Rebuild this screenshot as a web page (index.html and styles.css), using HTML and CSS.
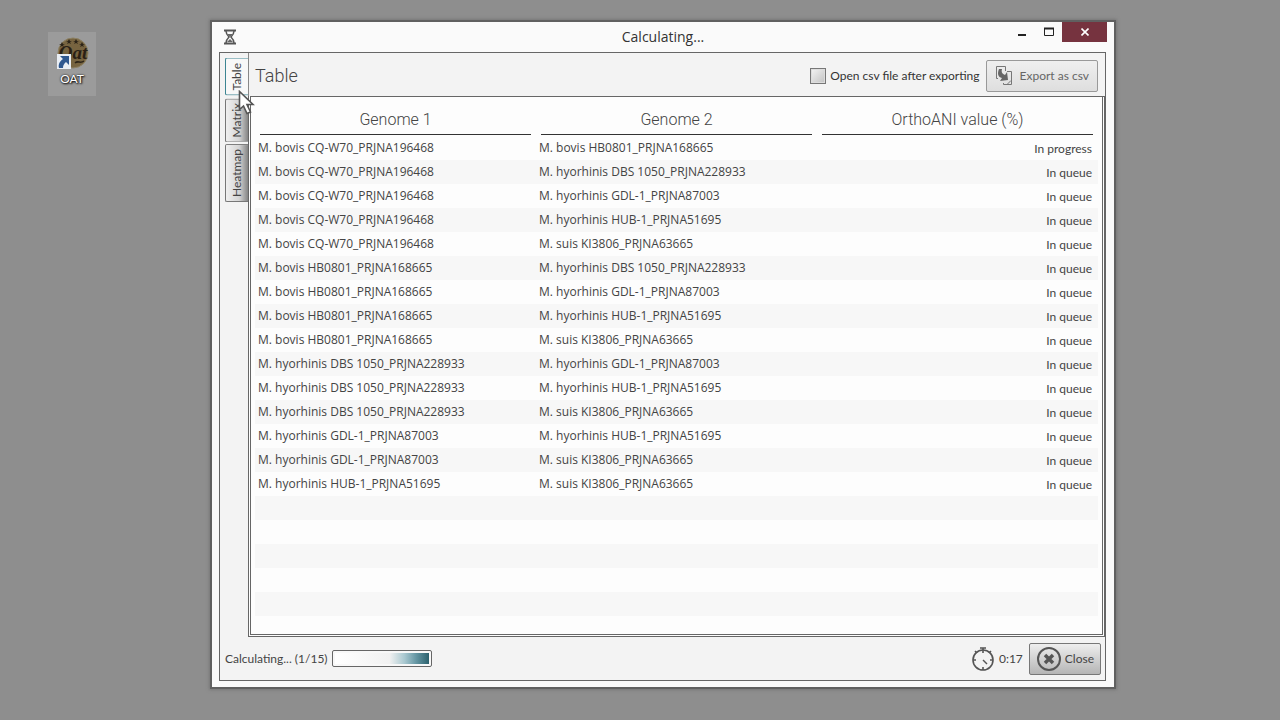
FILE: index.html
```html
<!DOCTYPE html>
<html lang="en">
<head>
<meta charset="utf-8">
<title>Calculating...</title>
<link rel="stylesheet" href="styles.css">
</head>
<body>
<div class="desktop">
  <div class="shortcuts">
    <a class="shortcut" href="#">
      <svg class="shortcut-icon" width="34" height="34" viewBox="0 0 34 34" aria-hidden="true">
        <circle cx="18" cy="17" r="15" fill="#776440" stroke="#8d8163"/>
        <path d="M7 6l1 2 2 0-2 1 1 2-2-1-2 1 1-2-2-1 2 0zM14 3l1 2 2 0-2 1 1 2-2-1-2 1 1-2-2-1 2 0zM21 3l1 2 2 0-2 1 1 2-2-1-2 1 1-2-2-1 2 0zM27 6l1 2 2 0-2 1 1 2-2-1-2 1 1-2-2-1 2 0z" fill="#2c2418"/>
        <text class="logo-text" x="18" y="23" text-anchor="middle">Oat</text>
        <path d="M20 27c3-3 5 1 9-2" fill="none" stroke="#2c2418" stroke-width="1.500"/>
        <rect x="2" y="18" width="14" height="15" fill="#e9eef4"/>
        <path d="M5 20h9v9l-3-3c-2 2-3 3-3 6H4c-1-4 1-7 4-9z" fill="#2f588f"/>
      </svg>
      <span class="shortcut-label">OAT</span>
    </a>
  </div>

  <main class="window">
    <header class="titlebar">
      <svg class="hourglass" width="14" height="16" viewBox="0 0 14 16" fill="none" stroke="#555" aria-hidden="true">
        <path d="M1 1.500h12M1 14.500h12" stroke-width="2"/>
        <path d="M3 2c0 3 1 4 3 6-2 2-3 3-3 6M11 2c0 3-1 4-3 6 2 2 3 3 3 6" stroke-width="1.500"/>
        <path d="M4 5h6L7 8zM4 13l3-3 3 3z" fill="#666" stroke="none"/>
      </svg>
      <h1 class="window-title">Calculating...</h1>
      <div class="window-buttons">
        <button class="win-btn" aria-label="Minimize"><svg width="10" height="10" viewBox="0 0 10 10"><path d="M1 8h8" stroke="#222" stroke-width="2"/></svg></button>
        <button class="win-btn" aria-label="Maximize"><svg width="10" height="10" viewBox="0 0 10 10"><path d="M.5 1v7.500h9V1" fill="none" stroke="#222"/><path d="M0 1.500h10" stroke="#222" stroke-width="2"/></svg></button>
        <button class="win-btn win-close" aria-label="Close window"><svg width="8" height="8" viewBox="0 0 8 8"><path d="M.5.5l7 7M7.500.5l-7 7" stroke="#fff" stroke-width="1.600"/></svg></button>
      </div>
    </header>

    <div class="client">
      <div class="workspace">
        <div class="tabs" role="tablist">
          <button class="tab tab-active" role="tab" aria-selected="true">Table</button>
          <button class="tab" role="tab" aria-selected="false">Matrix</button>
          <button class="tab" role="tab" aria-selected="false">Heatmap</button>
          <svg class="cursor" width="17" height="25" viewBox="0 0 17 25" aria-hidden="true"><path d="M1.500 1.500v18l4-3.500 3.500 7.500 3.500-1.500-3.500-7.500h6z" fill="#fff" stroke="#555" stroke-width="1.600"/></svg>
        </div>
        <section class="content">
          <div class="toolbar">
            <h2 class="section-title">Table</h2>
            <label class="check"><input type="checkbox" class="check-box">Open csv file after exporting</label>
            <button class="btn btn-export">
              <svg width="18" height="22" viewBox="0 0 18 22" fill="none" stroke="#777" aria-hidden="true">
                <path d="M3 13.500H1.500v-12h9V6M12 6.500h4.500v13h-8V18M12 19.500l4-4"/>
                <path d="M4 4C2 9 3 12 7 13l-2 3 8-1-1-8-2 3C7 9 6 7 7 4z" fill="#666" stroke="none"/>
              </svg>
              Export as csv
            </button>
          </div>
          <div class="panel">
            <table class="results">
              <thead><tr><th><span class="head">Genome 1</span></th><th><span class="head">Genome 2</span></th><th><span class="head">OrthoANI value (%)</span></th></tr></thead>
              <tbody>
                <tr><td>M. bovis CQ-W70_PRJNA196468</td><td>M. bovis HB0801_PRJNA168665</td><td>In progress</td></tr>
                <tr><td>M. bovis CQ-W70_PRJNA196468</td><td>M. hyorhinis DBS 1050_PRJNA228933</td><td>In queue</td></tr>
                <tr><td>M. bovis CQ-W70_PRJNA196468</td><td>M. hyorhinis GDL-1_PRJNA87003</td><td>In queue</td></tr>
                <tr><td>M. bovis CQ-W70_PRJNA196468</td><td>M. hyorhinis HUB-1_PRJNA51695</td><td>In queue</td></tr>
                <tr><td>M. bovis CQ-W70_PRJNA196468</td><td>M. suis KI3806_PRJNA63665</td><td>In queue</td></tr>
                <tr><td>M. bovis HB0801_PRJNA168665</td><td>M. hyorhinis DBS 1050_PRJNA228933</td><td>In queue</td></tr>
                <tr><td>M. bovis HB0801_PRJNA168665</td><td>M. hyorhinis GDL-1_PRJNA87003</td><td>In queue</td></tr>
                <tr><td>M. bovis HB0801_PRJNA168665</td><td>M. hyorhinis HUB-1_PRJNA51695</td><td>In queue</td></tr>
                <tr><td>M. bovis HB0801_PRJNA168665</td><td>M. suis KI3806_PRJNA63665</td><td>In queue</td></tr>
                <tr><td>M. hyorhinis DBS 1050_PRJNA228933</td><td>M. hyorhinis GDL-1_PRJNA87003</td><td>In queue</td></tr>
                <tr><td>M. hyorhinis DBS 1050_PRJNA228933</td><td>M. hyorhinis HUB-1_PRJNA51695</td><td>In queue</td></tr>
                <tr><td>M. hyorhinis DBS 1050_PRJNA228933</td><td>M. suis KI3806_PRJNA63665</td><td>In queue</td></tr>
                <tr><td>M. hyorhinis GDL-1_PRJNA87003</td><td>M. hyorhinis HUB-1_PRJNA51695</td><td>In queue</td></tr>
                <tr><td>M. hyorhinis GDL-1_PRJNA87003</td><td>M. suis KI3806_PRJNA63665</td><td>In queue</td></tr>
                <tr><td>M. hyorhinis HUB-1_PRJNA51695</td><td>M. suis KI3806_PRJNA63665</td><td>In queue</td></tr>
                <tr><td></td><td></td><td></td></tr>
                <tr><td></td><td></td><td></td></tr>
                <tr><td></td><td></td><td></td></tr>
                <tr><td></td><td></td><td></td></tr>
                <tr><td></td><td></td><td></td></tr>
              </tbody>
            </table>
          </div>
        </section>
      </div>

      <footer class="statusbar">
        <label for="progress">Calculating... (1/15)</label>
        <progress id="progress" class="progress"></progress>
        <svg class="clock" width="24" height="26" viewBox="0 0 24 26" fill="none" stroke="#555" aria-hidden="true">
          <circle cx="12" cy="14" r="10" stroke-width="1.600"/>
          <path d="M9 2h6M12 2v5M12 21v3M2 14h3M19 14h3M20 5l-2 2M4 5l2 2" stroke-width="1.600"/>
          <path d="M12 14l4 4" stroke-width="1.400"/>
        </svg>
        <span class="elapsed">0:17</span>
        <button class="btn btn-close">
          <svg width="26" height="26" viewBox="0 0 26 26" fill="none" stroke="#555" aria-hidden="true">
            <circle cx="13" cy="13" r="11" stroke-width="2"/>
            <path d="M9 9l8 8M17 9l-8 8" stroke-width="3.500"/>
          </svg>
          Close
        </button>
      </footer>
    </div>
  </main>
</div>
</body>
</html>
```
FILE: styles.css
```css
* { box-sizing: border-box; }

body {
  margin: 0;
  background: #8e8e8e;
  color: #444;
  font: 12px/16px Lato, "Open Sans", sans-serif;
}

button { font: inherit; color: inherit; }

.desktop {
  display: grid;
  grid-template-columns: 212px 1fr;
  min-height: 100vh;
  padding: 22px 166px 33px 0;
}

.shortcuts { padding: 10px 48px; }

.shortcut {
  display: flex;
  flex-direction: column;
  align-items: center;
  width: 48px;
  padding: 4px 0 8px;
  background: #9b9b9b;
  color: #fff;
  text-decoration: none;
}

.shortcut-label {
  line-height: 18px;
  text-shadow: 0 0 2px #000, 1px 1px 2px #000;
}

.logo-text {
  font: italic bold 19px "Liberation Serif", serif;
  fill: #2a2015;
}

.window {
  display: flex;
  flex-direction: column;
  padding: 0 7px 6px;
  background: #fafafa;
  box-shadow: 0 0 0 2px #606060, 0 0 3px 3px #777;
}

.titlebar {
  display: grid;
  grid-template-columns: 100px 1fr 100px;
  align-items: start;
  height: 30px;
}

.hourglass { margin: 7px 4px; }

.window-title {
  margin: 0;
  font: 14px/30px "Open Sans", sans-serif;
  text-align: center;
  color: #333;
}

.window-buttons { display: flex; justify-content: flex-end; }

.win-btn {
  flex: none;
  display: flex;
  align-items: center;
  justify-content: center;
  width: 27px;
  height: 20px;
  padding: 0;
  border: 0;
  background: none;
}

.win-close { width: 45px; background: #76333f; }

.client {
  flex: 1;
  display: flex;
  flex-direction: column;
  margin-right: 1px;
  border: 1px solid #666;
  background: #f3f3f3;
}

.workspace { flex: 1; display: flex; }

.tabs {
  position: relative;
  display: flex;
  flex-direction: column;
  align-items: stretch;
  gap: 2px;
  width: 28px;
  padding: 5px 0 0 5px;
}

.tab {
  display: flex;
  align-items: center;
  justify-content: flex-start;
  padding: 4px;
  border: 1px solid #777;
  border-left: 0;
  border-radius: 0 2px 2px 0;
  background: linear-gradient(to left, #f0f0f0, #d4d4d4 60%, #858585);
  writing-mode: vertical-rl;
  transform: rotate(180deg);
}

.tab-active { background: #f8f8f8; border-color: #3c8592; }

.cursor { position: absolute; left: 18px; top: 37px; z-index: 1; }

.content { flex: 1; display: flex; flex-direction: column; }

.toolbar {
  display: flex;
  align-items: center;
  gap: 6px;
  height: 43px;
  padding: 2px 7px 0 6px;
  border-left: 1px solid #888;
}

.section-title {
  flex: 1;
  margin: 0;
  font: 300 18px/24px Roboto, sans-serif;
}

.check { display: flex; align-items: center; gap: 4px; color: #333; }

.check-box {
  appearance: none;
  width: 16px;
  height: 16px;
  margin: 0;
  border: 1px solid #777;
  background: linear-gradient(135deg, #f4f4f4, #c2c2c2);
  box-shadow: inset 0 0 0 1px #ddd;
}

.btn {
  display: flex;
  align-items: center;
  height: 32px;
  border: 1px solid #777;
  border-radius: 2px;
}

.btn-export {
  gap: 7px;
  padding: 0 8px;
  border-color: #999;
  background: linear-gradient(#efefef, #dedede);
  color: #666;
}

.panel {
  flex: 1;
  padding: 0 4px;
  border: 3px double #666;
  border-top: 1px solid #666;
  background: #fdfdfd;
}

.results {
  width: 100%;
  table-layout: fixed;
  border-collapse: collapse;
}

.results th { padding: 11px 5px 1px; }

.head {
  display: block;
  padding-bottom: 2px;
  border-bottom: 1px solid #333;
  font: 300 16px/24px Roboto, sans-serif;
}

.results td {
  height: 24px;
  padding: 0 3px;
  font-family: "Open Sans", sans-serif;
}

.results td:last-child {
  padding: 2px 6px 0;
  font-family: Lato, sans-serif;
  text-align: right;
}

.results tbody tr:nth-child(even) { background: #f7f7f7; }

.statusbar {
  display: flex;
  align-items: center;
  height: 43px;
  padding: 0 4px 0 5px;
}

.progress {
  appearance: none;
  width: 100px;
  height: 17px;
  margin: 0 auto 0 4px;
  padding: 2px;
  border: 1px solid #666;
  border-radius: 2px;
  background: #f8f8f8;
}

.progress::-webkit-progress-bar {
  background: linear-gradient(to right, #fff, #f1f1f1 58%, #a9c8d0 74%, #6798a5 86%, #2b616d);
}

.elapsed { margin: 0 6px 0 4px; }

.btn-close {
  gap: 3px;
  padding: 0 6px;
  background: linear-gradient(#eee, #b5b5b5);
}
```
